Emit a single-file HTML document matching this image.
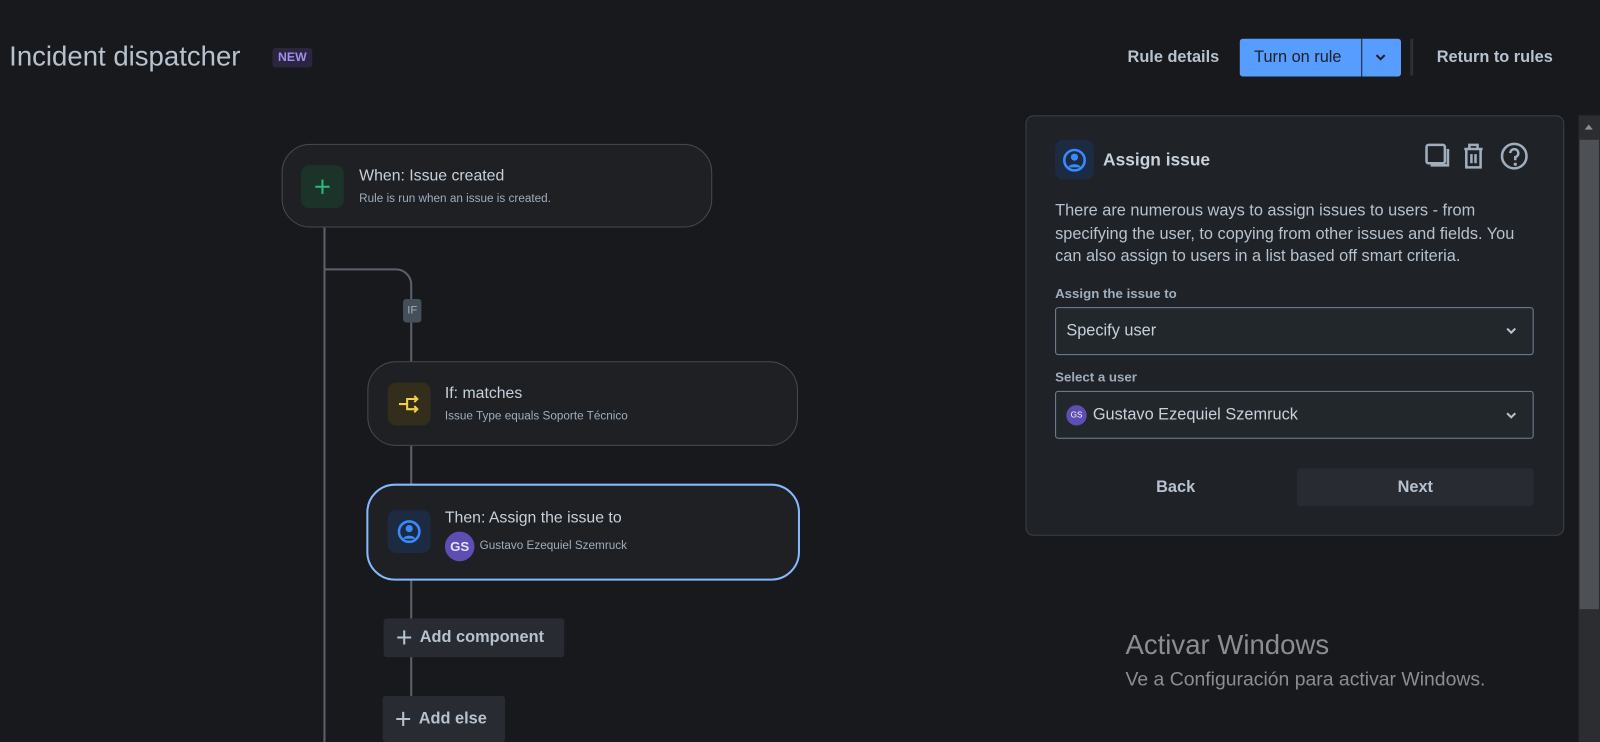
<!DOCTYPE html>
<html><head><meta charset="utf-8"><style>
*{box-sizing:border-box;margin:0;padding:0}
html,body{width:1600px;height:727px;overflow:hidden;background:#18191c}
#w{position:absolute;left:0;top:0;width:1568px;height:713px;transform:scale(1.0204);transform-origin:0 0;font-family:"Liberation Sans",sans-serif;color:#b6c2cf}
.a{position:absolute}
.card{position:absolute;background:#1e2024;border:1px solid #454a52;border-radius:28px}
.ic{position:absolute;width:42px;height:42px;border-radius:8px;display:flex;align-items:center;justify-content:center}
.t{position:absolute;font-size:15.5px;color:#c7d1db}
.s{position:absolute;font-size:11.5px;color:#9fadbc}
.ln{position:absolute;background:#5b616b;width:2px}
.btn{position:absolute;background:#282c32;border-radius:3px;font-size:16px;font-weight:bold;color:#b6c2cf;display:flex;align-items:center}
.sel{position:absolute;left:1034px;width:469px;height:47px;border:1px solid #738496;border-radius:3px;background:#22272b;font-size:16px;color:#c7d1db;display:flex;align-items:center;padding-left:10px}
.lab{position:absolute;left:1034px;font-size:13px;font-weight:bold;color:#9fadbc}
</style></head><body><div id="w">
<div class="a" style="left:9px;top:40px;font-size:27px;color:#b6c2cf">Incident dispatcher</div>
<div class="a" style="left:267px;top:47px;width:39px;height:19px;background:#2b2540;border-radius:3px;color:#9f8fef;font-size:12px;font-weight:bold;text-align:center;line-height:19px">NEW</div>
<div class="a" style="left:1105px;top:48px;font-size:16px;font-weight:bold;color:#b6c2cf">Rule details</div>
<div class="a" style="left:1215px;top:38px;width:158px;height:37px;background:#579dff;border-radius:3px"></div>
<div class="a" style="left:1229px;top:48px;font-size:16px;color:#1d2125">Turn on rule</div>
<div class="a" style="left:1334px;top:38px;width:1px;height:37px;background:#1d2125"></div>
<svg class="a" style="left:1347px;top:51px" width="12" height="10"><path d="M2 3l4 4 4-4" stroke="#1d2125" stroke-width="2" fill="none"/></svg>
<div class="a" style="left:1382px;top:38px;width:3px;height:36px;background:#2c3036"></div>
<div class="a" style="left:1408px;top:48px;font-size:16px;font-weight:bold;color:#b6c2cf">Return to rules</div>

<div class="ln" style="left:317px;top:223px;height:504px"></div>
<svg class="a" style="left:318px;top:262px" width="90" height="94"><path d="M0 2H70a15 15 0 0 1 15 15V92" stroke="#5b616b" stroke-width="2" fill="none"/></svg>
<div class="a" style="left:395px;top:293px;width:18px;height:23px;background:#454f59;border-radius:3px;font-size:11px;color:#9fadbc;text-align:center;line-height:23px">IF</div>
<div class="ln" style="left:402px;top:437px;height:38px"></div>
<div class="ln" style="left:402px;top:569px;height:150px"></div>

<div class="card" style="left:276px;top:141px;width:422px;height:82px"></div>
<div class="ic" style="left:295px;top:162px;background:#1c3329"><svg width="16" height="16"><path d="M8 1v14M1 8h14" stroke="#2abb7f" stroke-width="2"/></svg></div>
<div class="t" style="left:352px;top:164px">When: Issue created</div>
<div class="s" style="left:352px;top:189px">Rule is run when an issue is created.</div>

<div class="card" style="left:360px;top:354px;width:422px;height:83px"></div>
<div class="ic" style="left:380px;top:375px;background:#332e1b"><svg width="24" height="22"><path d="M2 11h8M10 11V6h10M10 11v5h10M17 3l3 3-3 3M17 13l3 3-3 3" stroke="#f5cd47" stroke-width="2" fill="none"/></svg></div>
<div class="t" style="left:436px;top:377px">If: matches</div>
<div class="s" style="left:436px;top:402px">Issue Type equals Soporte Técnico</div>

<div class="card" style="left:359px;top:474px;width:425px;height:95px;border:2px solid #85b8ff"></div>
<div class="ic" style="left:380px;top:500px;background:#1c2b41"><svg width="24" height="24"><circle cx="12" cy="12" r="10" stroke="#388bff" stroke-width="2.5" fill="none"/><circle cx="12" cy="9" r="3.5" fill="#388bff"/><path d="M6 19c1-4 11-4 12 0" fill="#388bff"/></svg></div>
<div class="t" style="left:436px;top:499px">Then: Assign the issue to</div>
<div class="a" style="left:436px;top:521px;width:29px;height:29px;border-radius:50%;background:#5e4db2;color:#e6e0ff;font-size:13px;font-weight:bold;text-align:center;line-height:29px">GS</div>
<div class="s" style="left:470px;top:529px">Gustavo Ezequiel Szemruck</div>

<div class="btn" style="left:376px;top:606px;width:177px;height:38px;padding-left:12px"><span style="font-size:28px;font-weight:normal;margin-right:7px;line-height:1">+</span>Add component</div>
<div class="btn" style="left:375px;top:682px;width:120px;height:45px;padding-left:12px"><span style="font-size:28px;font-weight:normal;margin-right:7px;line-height:1">+</span>Add else</div>

<div class="a" style="left:1005px;top:113px;width:528px;height:412px;background:#1f2226;border:1px solid #3c4148;border-radius:8px"></div>
<div class="ic" style="left:1034px;top:137px;width:38px;height:39px;background:#1c2b41"><svg width="24" height="24"><circle cx="12" cy="12" r="10" stroke="#388bff" stroke-width="2.5" fill="none"/><circle cx="12" cy="9" r="3.5" fill="#388bff"/><path d="M6 19c1-4 11-4 12 0" fill="#388bff"/></svg></div>
<div class="a" style="left:1081px;top:147px;font-size:17px;font-weight:bold;color:#c7d1db">Assign issue</div>
<svg class="a" style="left:1395px;top:138px" width="110" height="32"><g stroke="#9fadbc" stroke-width="2.5" fill="none"><rect x="3" y="4" width="18" height="18" rx="2"/><path d="M24 8v16H7"/><path d="M40 8h18M45 8V4h8v4M42 9v17h14V9M47 13v9M51 13v9"/><circle cx="89" cy="15" r="12"/><path d="M85 12a4 4 0 1 1 5 4v3"/></g><circle cx="90" cy="23" r="1.6" fill="#9fadbc"/></svg>
<div class="a" style="left:1034px;top:196px;width:470px;font-size:16px;line-height:22.5px;color:#b6c2cf">There are numerous ways to assign issues to users - from specifying the user, to copying from other issues and fields. You can also assign to users in a list based off smart criteria.</div>
<div class="lab" style="top:280px">Assign the issue to</div>
<div class="sel" style="top:301px">Specify user</div>
<svg class="a" style="left:1475px;top:319px" width="12" height="10"><path d="M2 3l4 4 4-4" stroke="#b6c2cf" stroke-width="2" fill="none"/></svg>
<div class="lab" style="top:362px">Select a user</div>
<div class="sel" style="top:383px"><span style="width:20px;height:20px;border-radius:50%;background:#5e4db2;color:#fff;font-size:8px;text-align:center;line-height:20px;margin-right:6px">GS</span>Gustavo Ezequiel Szemruck</div>
<svg class="a" style="left:1475px;top:402px" width="12" height="10"><path d="M2 3l4 4 4-4" stroke="#b6c2cf" stroke-width="2" fill="none"/></svg>
<div class="a" style="left:1133px;top:469px;font-size:16px;font-weight:bold;color:#b6c2cf">Back</div>
<div class="a" style="left:1271px;top:459px;width:232px;height:37px;background:#282c32;border-radius:3px;font-size:16px;font-weight:bold;color:#b6c2cf;text-align:center;line-height:37px">Next</div>

<div class="a" style="left:1547px;top:113px;width:21px;height:614px;background:#2b2d30"></div>
<div class="a" style="left:1548px;top:137px;width:19px;height:460px;background:#4d5055"></div>
<svg class="a" style="left:1552px;top:120px" width="10" height="8"><path d="M1 7l4-5 4 5z" fill="#8a8d91"/></svg>

<div class="a" style="left:1103px;top:617px;font-size:27px;color:#8a8d92">Activar Windows</div>
<div class="a" style="left:1103px;top:656px;font-size:19px;color:#8a8d92">Ve a Configuración para activar Windows.</div>
</div></body></html>
